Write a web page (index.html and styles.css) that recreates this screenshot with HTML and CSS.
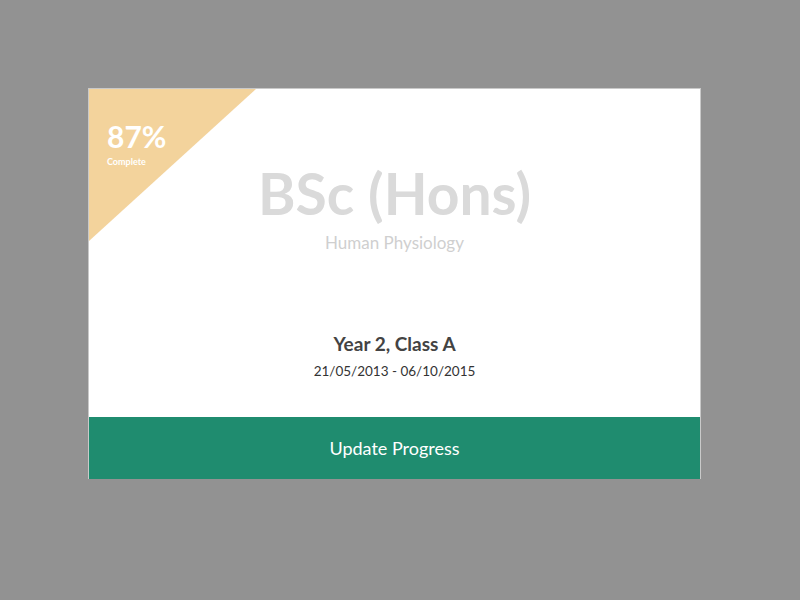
FILE: index.html
```html
<!DOCTYPE html>
<html>

<head>
    <title>Course Progress</title>
    <link rel="stylesheet" href="styles.css">
</head>

<body>
    <div class="card">
        <!-- progress corner -->
        <div class="corner">
            <svg class="corner-shape" width="167" height="152" viewBox="0 0 167 152">
                <polygon points="0,0 167,0 0,152" fill="#f3d39c" />
            </svg>
            <div class="corner-text">
                <div class="percent">87%</div>
                <div class="complete">Complete</div>
            </div>
        </div>

        <div class="card-body">
            <h1 class="degree">BSc (Hons)</h1>
            <p class="subject">Human Physiology</p>

            <h2 class="class-name">Year 2, Class A</h2>
            <p class="dates">21/05/2013 - 06/10/2015</p>
        </div>

        <button class="update-btn">Update Progress</button>
    </div>
</body>

</html>
```

FILE: styles.css
```css
/* Course progress card */
body {
    margin: 0;
    background-color: #929292;
    font-family: Lato, "Open Sans", sans-serif;
    height: 100vh;
}

.card {
    position: relative;
    width: 611px;
    margin: 88px 0 0 88px;
    background-color: #fff;
    border: 1px solid #c9c9c9;
    border-bottom: none;
    overflow: hidden;
}

.corner {
    position: absolute;
    top: 0;
    left: 0;
    width: 167px;
    height: 152px;
}

.corner-shape {
    display: block;
}

.corner-text {
    position: absolute;
    top: 30px;
    left: 18px;
    color: #fff;
}

.percent {
    font-size: 30px;
    font-weight: bold;
    line-height: 34px;
}

.complete {
    font-size: 9px;
    font-weight: bold;
    margin-top: 3px;
}

.card-body {
    text-align: center;
    padding: 75px 0 36px;
}

.degree {
    margin: 0;
    font-size: 57px;
    font-weight: bold;
    line-height: 58px;
    color: #dadada;
}

.subject {
    margin: 11px 0 0;
    font-size: 17px;
    line-height: 20px;
    color: #cfcfcf;
}

.class-name {
    margin: 79px 0 0;
    font-size: 19px;
    font-weight: bold;
    line-height: 24px;
    color: #434343;
}

.dates {
    margin: 5px 0 0;
    font-size: 13.5px;
    line-height: 20px;
    color: #333;
}

.update-btn {
    display: block;
    width: 100%;
    height: 62px;
    border: none;
    background-color: #1f8c6f;
    color: #fff;
    font-family: Lato, "Open Sans", sans-serif;
    font-size: 18px;
    cursor: pointer;
}
```
